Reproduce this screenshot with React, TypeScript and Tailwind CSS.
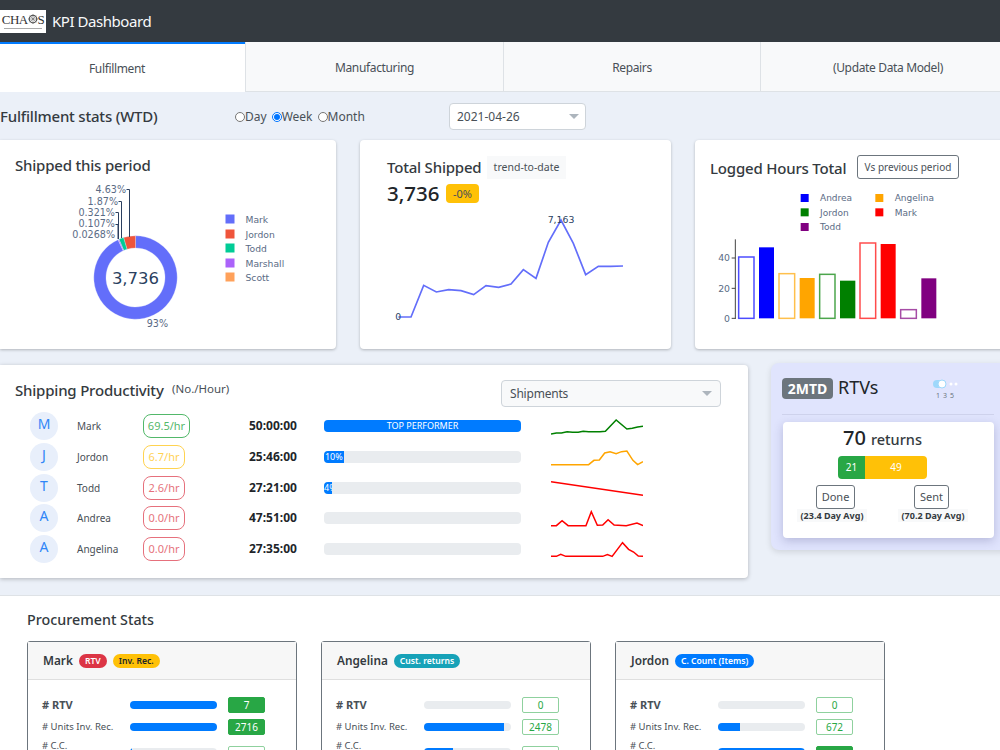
const sparkClass = 'block w-[92px] h-[22px] fill-none';

const people = [
    { initial: 'M', name: 'Mark', rate: '69.5/hr', rateClass: 'border-[#28a745] text-[#28a745] w-[47px] opacity-80', time: '50:00:00', pct: 100, label: 'TOP PERFORMER', color: '#008000', y: 148, points: '694,205 710,202 725,202 742,198 758,200 775,200 790,197 806,198 823,198 840,198 856,197 888,163 920,190 936,188 952,184 968,182' },
    { initial: 'J', name: 'Jordon', rate: '6.7/hr', rateClass: 'border-[#ffc107] text-[#ffc107] w-[42px] opacity-70', time: '25:46:00', pct: 10, label: '10%', color: '#ffa500', y: 240, points: '694,296 806,296 822,283 838,282 854,261 870,257 888,263 904,257 920,255 938,283 952,296 968,287' },
    { initial: 'T', name: 'Todd', rate: '2.6/hr', rateClass: 'border-[#dc3545] text-[#dc3545] w-[42px] opacity-70', time: '27:21:00', pct: 4, label: '4%', color: '#ff0000', y: 332, points: '694,346 968,387' },
    { initial: 'A', name: 'Andrea', rate: '0.0/hr', rateClass: 'border-[#dc3545] text-[#dc3545] w-[42px] opacity-70', time: '47:51:00', pct: 0, label: '', color: '#ff0000', y: 424, points: '694,480 710,480 727,465 745,480 798,480 814,438 832,479 848,478 864,462 882,478 918,480 950,472 968,480' },
    { initial: 'A', name: 'Angelina', rate: '0.0/hr', rateClass: 'border-[#dc3545] text-[#dc3545] w-[42px] opacity-70', time: '27:35:00', pct: 0, label: '', color: '#ff0000', y: 516, points: '694,571 710,571 723,565 738,571 848,571 862,566 876,571 907,530 925,550 940,558 954,570 968,571' },
];

const procurement = [
    {
        name: 'Mark',
        badges: [
            { text: 'RTV', cls: 'bg-[#dc3545] text-white' },
            { text: 'Inv. Rec.', cls: 'bg-[#ffc107] text-[#212529]' },
        ],
        rows: [
            { value: '7', pct: 100, solid: true },
            { value: '2716', pct: 100, solid: true },
            { value: '', pct: 2, solid: false },
        ],
    },
    {
        name: 'Angelina',
        badges: [{ text: 'Cust. returns', cls: 'bg-[#17a2b8] text-white' }],
        rows: [
            { value: '0', pct: 0, solid: false },
            { value: '2478', pct: 92, solid: false },
            { value: '', pct: 33, solid: false },
        ],
    },
    {
        name: 'Jordon',
        badges: [{ text: 'C. Count (Items)', cls: 'bg-[#007bff] text-white' }],
        rows: [
            { value: '0', pct: 0, solid: false },
            { value: '672', pct: 25, solid: false },
            { value: '', pct: 100, solid: true },
        ],
    },
];

const rowLabels = ['# RTV', '# Units Inv. Rec.', '# C.C.'];

// donut slice between two angles (degrees, clockwise from top)
const slice = (from: number, to: number, color: string) => {
    const R = 41.7;
    const r = 29.5;
    const cx = 135.5;
    const cy = 137.5;
    const pt = (rad: number, a: number) => {
        const t = (a * Math.PI) / 180;
        return `${(cx + rad * Math.sin(t)).toFixed(2)} ${(cy - rad * Math.cos(t)).toFixed(2)}`;
    };
    const large = to - from > 180 ? 1 : 0;
    return (
        <path
            d={`M${pt(R, from)} A${R} ${R} 0 ${large} 1 ${pt(R, to)} L${pt(r, to)} A${r} ${r} 0 ${large} 0 ${pt(r, from)} Z`}
            fill={color}
            stroke="#e8e9fb"
            strokeWidth="0.3"
        />
    );
};

const Donut = () => (
    <svg className="block w-[336px] h-[179px] font-['DejaVu_Sans',sans-serif]" viewBox="0 30 336 179">
        {slice(0, 335.2, '#636efa')}
        {slice(343.3, 360, '#ef553b')}
        {slice(336.6, 343.3, '#00cc96')}
        {slice(335.4, 336.6, '#ab63fa')}
        <g fill="none" stroke="#2a3f5f" strokeWidth="1">
            <path d="M126.500 49.500 H129.500 V97" />
            <path d="M118.500 61.500 H121.500 V98" />
            <path d="M115.500 72.500 H118.500 V99" />
            <path d="M115.500 84.500 H118 V99" />
        </g>
        <g fill="#5a6b85" fontSize="9.6" textAnchor="end">
            <text x="126" y="52.500">4.63%</text>
            <text x="118" y="64.500">1.87%</text>
            <text x="115" y="75.500">0.321%</text>
            <text x="115" y="87">0.107%</text>
            <text x="115" y="98">0.0268%</text>
            <text x="168" y="187">93%</text>
        </g>
        <text x="135.500" y="144" textAnchor="middle" fontSize="16.500" fill="#2a3f5f">3,736</text>
        {[
            ['Mark', '#636efa', 79],
            ['Jordon', '#ef553b', 94],
            ['Todd', '#00cc96', 108],
            ['Marshall', '#ab63fa', 123],
            ['Scott', '#ffa15a', 137],
        ].map(([label, color, y]) => (
            <g key={label as string}>
                <rect x="225.500" y={(y as number) - 4.5} width="9" height="9" fill={color as string} />
                <text x="245.500" y={(y as number) + 3.5} fontSize="9.200" fill="#5a6b85">{label}</text>
            </g>
        ))}
    </svg>
);

const TrendChart = () => (
    <svg className="block w-[320px] h-[135px] -ml-[32px] -mt-[2px] font-['DejaVu_Sans',sans-serif]" viewBox="0 210 960 405">
        <polyline
            points="130,546 168,546 206,451 244,471 281,464 318,467 356,479 393,452 431,457 468,447 505,404 543,430 580,322 618,255 655,325 692,419 730,394 767,394 804,393"
            fill="none"
            stroke="#636efa"
            strokeWidth="5"
        />
        <text x="618" y="263" textAnchor="middle" fontSize="28" fill="#2a3f5f">7,163</text>
        <text x="130" y="556" textAnchor="middle" fontSize="28" fill="#2a3f5f">0</text>
    </svg>
);

const barData = [
    [144, 194, 366, '#0000ff', false],
    [207, 252, 337, '#0000ff', true],
    [265, 316, 416, '#ffa500', false],
    [329, 374, 429, '#ffa500', true],
    [387, 437, 418, '#008000', false],
    [450, 496, 437, '#008000', true],
    [508, 559, 324, '#ff0000', false],
    [572, 617, 327, '#ff0000', true],
    [630, 681, 524, '#800080', false],
    [694, 739, 430, '#800080', true],
] as const;

const HoursChart = () => (
    <svg className="block w-[310px] h-[150px] -ml-[5px] mt-[11px] font-['DejaVu_Sans',sans-serif]" viewBox="0 165 930 450">
        {[
            ['Andrea', '#0000ff', 332, 189],
            ['Angelina', '#ffa500', 556, 189],
            ['Jordon', '#008000', 332, 232],
            ['Mark', '#ff0000', 556, 232],
            ['Todd', '#800080', 332, 276],
        ].map(([label, color, x, y]) => (
            <g key={label as string}>
                <rect x={x as number} y={(y as number) - 12} width="24" height="24" fill={color as string} />
                <text x={(x as number) + 58} y={(y as number) + 10} fontSize="27" fill="#5a6b85">{label}</text>
            </g>
        ))}
        <path d="M136 313 V552 M125 369 H136 M125 460 H136 M125 550 H136" stroke="#444" strokeWidth="3" fill="none" />
        <g fontSize="28" textAnchor="end" fill="#5a6b85">
            <text x="120" y="379">40</text>
            <text x="120" y="470">20</text>
            <text x="120" y="560">0</text>
        </g>
        {barData.map(([x1, x2, top, color, filled]) =>
            filled ? (
                <rect key={x1} x={x1} y={top} width={x2 - x1} height={550 - top} fill={color} />
            ) : (
                <rect key={x1} x={x1 + 2} y={top} width={x2 - x1 - 4} height={550 - top} fill="#fff" stroke={color} strokeOpacity="0.7" strokeWidth="4.500" />
            ),
        )}
    </svg>
);

const SelectCaret = () => <span className="border-x-[5px] border-t-[5px] border-x-transparent border-t-[#adb5bd]" />;

export default function App() {
    return (
        <div className="w-[1000px] h-[750px] overflow-hidden bg-[#ebf0f8] text-[#212529] font-['Noto_Sans',sans-serif]">
            <nav className="h-[42px] bg-[#343a40] flex items-center">
                <div className="w-[46px] h-[23px] bg-white flex flex-col items-center overflow-hidden">
                    <span className="flex items-center h-[15px] mt-[2px] font-['Liberation_Serif',serif] text-[13px] leading-none text-[#333] tracking-[-0.6px]">
                        CHA
                        <svg className="w-[10px] h-[10px]" viewBox="0 0 12 12">
                            <circle cx="6" cy="6" r="4.500" fill="none" stroke="#555" strokeWidth="1.500" />
                            <path d="M6 0V12M0 6H12M2 2L10 10M10 2L2 10" stroke="#666" strokeWidth="0.700" />
                        </svg>
                        S
                    </span>
                    <span className="mt-[1px] w-[38px] h-[1px] bg-[#aaa]" />
                </div>
                <span className="ml-[6px] text-[15px] tracking-[-0.45px] text-[#f8f9fa]">KPI Dashboard</span>
            </nav>

            <div className="flex h-[50px] text-[12px] tracking-[-0.35px] text-[#495057]">
                <div className="w-[245px] bg-white border-t-2 border-[#007bff] flex items-center justify-center pr-[11px] pt-[1px]">Fulfillment</div>
                <div className="w-[258px] bg-[#f8f9fa] border-l border-b border-[#dee2e6] flex items-center justify-center pt-[3px]">Manufacturing</div>
                <div className="w-[257px] bg-[#f8f9fa] border-l border-b border-[#dee2e6] flex items-center justify-center pt-[3px]">Repairs</div>
                <div className="w-[240px] bg-[#f8f9fa] border-l border-b border-[#dee2e6] flex items-center justify-center pt-[3px] pl-[15px]">(Update Data Model)</div>
            </div>

            <div className="h-[48px] flex items-center pt-[1px]">
                <h1 className="w-[235px] text-[15px] tracking-[-0.2px] font-medium text-[#343a40] whitespace-nowrap">Fulfillment stats (WTD)</h1>
                <div className="w-[214px] flex items-center text-[12px] text-[#495057]">
                    <span className="w-[10px] h-[10px] rounded-full border border-[#767676] bg-white" />
                    <span>Day</span>
                    <span className="ml-[5px] w-[10px] h-[10px] rounded-full border border-[#0075ff] bg-white p-[1px]">
                        <span className="block w-full h-full rounded-full bg-[#0075ff]" />
                    </span>
                    <span>Week</span>
                    <span className="ml-[5px] w-[10px] h-[10px] rounded-full border border-[#767676] bg-white" />
                    <span>Month</span>
                </div>
                <div className="w-[137px] h-[27px] bg-white border border-[#ced4da] rounded flex items-center justify-between pl-[7px] pr-[6px] text-[12px] text-[#495057]">
                    2021-04-26
                    <SelectCaret />
                </div>
            </div>

            <div className="flex gap-6 h-[209px]">
                <section className="w-[336px] shrink-0 bg-white rounded-r shadow-[0_1px_3px_rgba(0,0,0,0.25)]">
                    <h2 className="pl-[15px] pt-[15px] h-[30px] text-[15px] tracking-[-0.2px] leading-[20px] font-medium text-[#343a40]">Shipped this period</h2>
                    <Donut />
                </section>
                <section className="w-[311px] shrink-0 bg-white rounded shadow-[0_1px_3px_rgba(0,0,0,0.25)] pl-[27px] pt-[16px]">
                    <div className="flex items-center h-[23px]">
                        <h2 className="w-[100px] text-[15px] tracking-[-0.2px] font-medium text-[#343a40] whitespace-nowrap">Total Shipped</h2>
                        <span className="w-[79px] h-[23px] leading-[23px] bg-[#f8f9fa] text-[10.500px] text-center text-[#495057] whitespace-nowrap">trend-to-date</span>
                    </div>
                    <div className="flex items-center h-[28px]">
                        <span className="w-[59px] text-[20.500px] font-medium leading-none">3,736</span>
                        <span className="w-[33px] h-[19px] bg-[#ffc107] rounded-sm text-[11px] leading-[19px] text-center text-[#495057]">-0%</span>
                    </div>
                    <TrendChart />
                </section>
                <section className="w-[320px] shrink-0 bg-white rounded shadow-[0_1px_3px_rgba(0,0,0,0.25)] pt-[15px]">
                    <div className="flex items-center h-[24px] pl-[15px]">
                        <h2 className="w-[147px] pt-[2px] text-[15px] tracking-[-0.2px] font-medium text-[#343a40] whitespace-nowrap">Logged Hours Total</h2>
                        <span className="w-[102px] h-[24px] border border-[#6c757d] rounded-[3px] text-[10px] leading-[22px] text-center text-[#495057] whitespace-nowrap">Vs previous period</span>
                    </div>
                    <HoursChart />
                </section>
            </div>

            <div className="flex items-start mt-[14px] h-[232px]">
                <section className="w-[748px] h-[213px] mt-[2px] shrink-0 bg-white rounded-r shadow-[0_1px_4px_rgba(0,0,0,0.25)]">
                    <div className="flex items-start h-[46px] pl-[15px]">
                        <h2 className="w-[157px] mt-[15px] leading-[20px] text-[15px] tracking-[-0.2px] font-medium text-[#343a40] whitespace-nowrap">Shipping Productivity</h2>
                        <span className="w-[329px] mt-[14px] leading-[20px] text-[11.500px] text-[#495057]">(No./Hour)</span>
                        <div className="w-[220px] h-[27px] mt-[15px] bg-[#f8f9fa] border border-[#ced4da] rounded flex items-center justify-between pl-[8px] pr-[8px] text-[12px] tracking-[-0.2px] text-[#495057]">
                            Shipments
                            <SelectCaret />
                        </div>
                    </div>
                    <div className="pl-[30px]">
                        {people.map((p) => (
                            <div key={p.name} className="flex items-center h-[30.7px]">
                                <span className="w-[28px] h-[28px] shrink-0 rounded-full bg-[#e8effb] text-[#2f86f7] text-[14px] leading-[24px] text-center">{p.initial}</span>
                                <span className="w-[85px] pl-[19px] pt-[1px] shrink-0 text-[10px] text-[#495057]">{p.name}</span>
                                <span className="w-[106px] shrink-0">
                                    <span className={`block h-[24px] border rounded-lg text-[11px] leading-[22px] text-center ${p.rateClass}`}>{p.rate}</span>
                                </span>
                                <span className="w-[75px] shrink-0 text-[12px] font-bold">{p.time}</span>
                                <div className="w-[197px] h-[12px] shrink-0 bg-[#e9ecef] rounded overflow-hidden flex">
                                    <div className="bg-[#007bff] text-white text-[9px] leading-[12px] text-center whitespace-nowrap overflow-hidden" style={{ width: `${p.pct}%` }}>{p.label}</div>
                                </div>
                                <svg className={`ml-[30px] ${sparkClass}`} viewBox={`694 ${p.y} 274 66`} preserveAspectRatio="none">
                                    <polyline points={p.points} stroke={p.color} strokeWidth="4.500" fill="none" />
                                </svg>
                            </div>
                        ))}
                    </div>
                </section>

                <section className="ml-[23px] w-[240px] h-[187px] shrink-0 bg-[#e0e4fd] rounded-lg shadow-[0_2px_6px_rgba(0,0,0,0.12)] pl-[11px] pr-[17px] pt-[15px]">
                    <div className="flex items-center h-[21px]">
                        <span className="w-[51px] h-[21px] bg-[#6c757d] rounded text-white text-[14px] font-bold leading-[21px] text-center">2MTD</span>
                        <span className="ml-[5px] w-[95px] -mt-[3px] text-[18px] leading-none">RTVs</span>
                        <div className="flex flex-col items-center">
                            <svg className="w-[27px] h-[12px]" viewBox="0 0 27 12">
                                <rect x="0" y="2" width="13" height="8" rx="4" fill="#9fd8fb" />
                                <circle cx="9" cy="6" r="4" fill="#fff" stroke="#9fd8fb" strokeWidth="1" />
                                <circle cx="18" cy="6" r="1.500" fill="#fff" />
                                <circle cx="23" cy="6" r="1.500" fill="#fff" />
                            </svg>
                            <span className="mt-[2px] text-[7px] leading-none text-[#6c757d] tracking-[3px]">135</span>
                        </div>
                    </div>
                    <hr className="mt-[15px] border-[#ced2ec]" />
                    <div className="mt-[7px] ml-[1px] h-[116px] w-[211px] bg-white rounded-sm shadow-[0_3px_10px_rgba(60,60,120,0.25)] flex flex-col items-center pt-[6px]">
                        <div className="h-[27px] mr-[12px] flex items-baseline leading-none">
                            <span className="text-[20px] font-medium">70</span>
                            <span className="ml-[5px] text-[14.500px] font-medium text-[#343a40]">returns</span>
                        </div>
                        <div className="mt-[1px] mr-[12px] flex w-[89px] h-[23px] rounded-sm overflow-hidden text-[10px] leading-[23px] text-white text-center">
                            <div className="w-[27px] bg-[#28a745]">21</div>
                            <div className="w-[62px] bg-[#ffc107]">49</div>
                        </div>
                        <div className="mt-[6px] flex w-full">
                            <div className="w-[98px] flex flex-col items-center">
                                <span className="ml-[7px] w-[39px] h-[24px] border border-[#6c757d] rounded-[3px] text-[11px] leading-[22px] text-center text-[#495057]">Done</span>
                                <span className="w-[70px] h-[13px] bg-[#f8f9fa] text-[9px] leading-[13px] font-bold text-[#343a40] text-center whitespace-nowrap">(23.4 Day Avg)</span>
                            </div>
                            <div className="w-[104px] flex flex-col items-center">
                                <span className="mr-[3px] w-[35px] h-[24px] border border-[#6c757d] rounded-[3px] text-[11px] leading-[22px] text-center text-[#495057]">Sent</span>
                                <span className="w-[70px] h-[13px] bg-[#f8f9fa] text-[9px] leading-[13px] font-bold text-[#343a40] text-center whitespace-nowrap">(70.2 Day Avg)</span>
                            </div>
                        </div>
                    </div>
                </section>
            </div>

            <div className="h-[200px] bg-white border-t border-[#dee2e6] pl-[27px] pt-[14px]">
                <h2 className="h-[31px] text-[14.300px] leading-[20px] font-medium text-[#343a40]">Procurement Stats</h2>
                <div className="flex gap-6">
                    {procurement.map((card) => (
                        <div key={card.name} className="w-[270px] h-[160px] shrink-0 border border-[#6c757d] rounded-[3px]">
                            <div className="h-[38px] bg-[#f7f7f7] border-b border-[#dfdfdf] flex items-center pl-[15px]">
                                <span className="text-[11.800px] font-semibold text-[#343a40]">{card.name}</span>
                                {card.badges.map((b) => (
                                    <span key={b.text} className={`ml-[6px] h-[14px] px-[6px] rounded-full text-[8.600px] font-semibold leading-[14px] whitespace-nowrap ${b.cls}`}>{b.text}</span>
                                ))}
                            </div>
                            <div className="pl-[14px] pt-[14px]">
                                {card.rows.map((row, i) => (
                                    <div key={rowLabels[i]} className={`flex ${i === 2 ? 'h-[24px] mt-[8px] items-start' : 'h-[22px] items-center'}`}>
                                        <span className={`w-[88px] shrink-0 text-[#495057] whitespace-nowrap ${i === 0 ? 'text-[11px] font-bold text-[#343a40]' : 'text-[9.500px]'} ${i === 1 ? 'pt-[1px]' : ''} ${i === 2 ? '-mt-[7px]' : ''}`}>{rowLabels[i]}</span>
                                        <div className={`w-[87px] h-[8px] shrink-0 bg-[#e9ecef] rounded overflow-hidden ${i === 2 ? 'mt-[2px]' : ''}`}>
                                            <div className="h-full bg-[#007bff]" style={{ width: `${row.pct}%` }} />
                                        </div>
                                        <span className={`ml-[11px] w-[37px] h-[16px] shrink-0 border rounded-[2px] text-[10px] leading-[15px] text-center ${row.solid ? 'bg-[#28a745] border-[#28a745] text-white' : 'bg-white border-[#8fd19e] text-[#28a745]'}`}>{row.value}</span>
                                    </div>
                                ))}
                            </div>
                        </div>
                    ))}
                </div>
            </div>
        </div>
    );
}
